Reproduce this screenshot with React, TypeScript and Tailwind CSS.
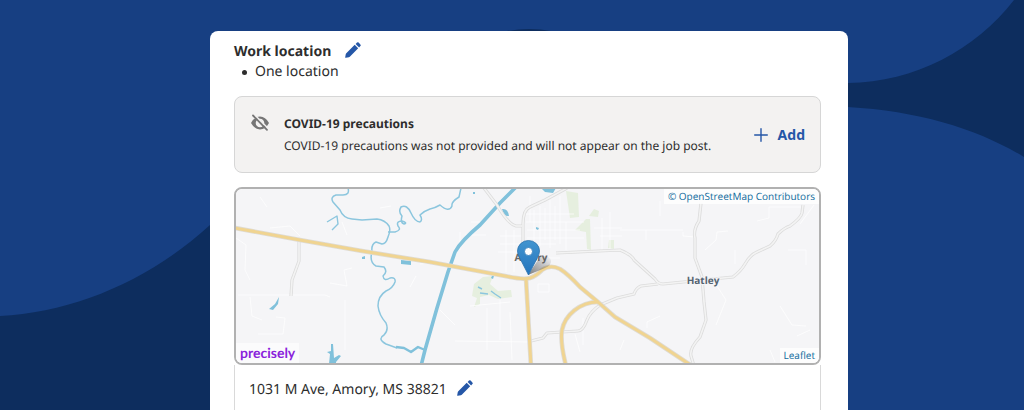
const MAJOR_ROADS = [
  'M235 228L300 240L362 251L430 262L505 276Q523 280 530 278Q536 276 542 270Q550 264 560 269Q568 274 580 287L598 302L615 317L650 338L692 366',
  'M526 279L531 366',
  'M598 302C580 302 565 315 562 330Q560 342 566 366',
];

const MINOR_ROADS = [
  'M484 188L497 205Q508 224 516 226L522 226',
  'M523 245L523 224Q523 210 530 207L545 200L567 188',
  'M556 253L620 250Q632 255 634 260L655 279Q658 284 663 284L733 277Q741 271 745 264Q750 255 757 252L770 246Q776 241 778 234Q784 228 790 226Q801 218 802 213L803 205',
  'M701 203L699 221Q693 230 695 238L695 258L702 277L704 302L706 320L700 337Q689 349 691 356L694 366',
  'M658 284L641 286Q636 288 634 294L617 298L600 305Q590 312 587 320Q583 331 578 331L562 332L547 333L543 338L531 341',
  'M299 241L299 261L292 280L291 296',
];

const STREETS = [
  'M260 197L267 207', 'M236 238L246 245L245 270L250 280', 'M270 228L290 226L300 236',
  'M238 295L325 295L330 297', 'M250 297L252 316L262 320', 'M258 334L283 334L285 318L276 317',
  'M345 300L345 350', 'M330 283L347 286L344 270L352 268', 'M342 222L347 235', 'M380 208L391 206',
  'M410 287L416 276', 'M460 232L460 250', 'M471 222L480 222M465 235L486 235', 'M420 264L440 262',
  'M487 308L487 350M500 300L500 340M510 312L512 360', 'M455 341L531 342', 'M470 306L510 302',
  'M440 310L455 325', 'M530 196L530 222M540 206L540 246M550 200L550 248M560 196L560 244',
  'M526 214L574 214M526 222L584 222M527 230L580 230M527 238L584 238',
  'M500 236L522 236M500 244L520 244M498 252L518 252M506 230L506 272M514 230L514 272',
  'M534 210L534 240M545 208L545 240M555 206L555 240M566 222L566 250',
  'M528 244L556 244M530 258L560 258M602 218L602 250M610 212L610 250M594 228L622 228M600 236L622 236',
  'M620 230L683 230M646 230L646 240M660 201L660 216', 'M683 232L683 236L695 237',
  'M705 250L716 240L717 232L728 231', 'M735 264L735 250', 'M757 221L769 218L769 207L803 207',
  'M717 286L726 300L716 325', 'M780 306L792 325L806 326', 'M797 336L810 330', 'M647 322L660 316',
  'M647 322L647 328', 'M583 318L583 345M580 352L575 334', 'M620 350L624 340', 'M770 350L775 362',
  'M788 250L806 250L806 265', 'M800 224L814 205', 'M538 284L538 292L549 292L549 284Z',
];

const RIVERS = [
  'M348 188Q350 195 343 195L336 195Q330 197 333 202L340 210Q343 218 352 219L362 220L377 219Q385 220 389 226Q391 230 388 237Q386 244 382 244L376 242Q371 244 372 252Q369 262 376 266L384 267Q388 272 383 276Q384 282 390 278Q396 277 395 282Q393 288 386 291Q378 296 378 306Q379 315 386 323Q389 330 384 335Q377 339 386 344L397 348',
  'M388 232L395 232Q402 230 398 226Q396 221 402 221Q408 223 404 224Q400 223 402 216Q398 212 401 207Q407 204 411 213Q415 222 420 222Q423 220 420 215Q424 211 430 209Q435 208 440 205Q449 213 452 206Q451 202 459 197L461 188',
];

const WATER = [
  'M541 188L556 188L553 193L545 192Z', 'M502 209Q508 208 509 216Q504 217 502 209Z',
  'M401 260L411 261L411 265L401 264Z', 'M279 297L278 304L273 310L269 309L275 304Z',
  'M362 257L365 256L365 259L362 259Z', 'M536 227L539 228L538 230L536 229Z',
  'M331 344L333 344L334 358L339 355L341 356L336 362L336 364L329 364L330 354L327 352L331 351Z',
  'M473 192L475 192L475 194L473 194Z', 'M492 276L494 276L493 279L491 278Z',
];

const PARKS = [
  'M566 191L578 193L579 217L570 218Z', 'M589 216L594 209L599 211L598 217Z',
  'M575 230L586 219L590 219L591 250L587 249L586 232Z', 'M609 240L614 240L614 249L608 248Z',
  'M474 284L483 277L493 276L490 284L498 291L511 290L512 297L498 299L489 295L480 297L480 304L474 307L477 298L472 296Z',
];

function PencilIcon() {
  return (
    <svg viewBox="0 0 16 16" className="size-4" fill="currentColor" aria-hidden="true">
      <path d="M9.7 2.8L13.2 6.3L4.8 14.7Q4.4 15.1 3.9 15.2L.8 15.8Q.1 15.9.2 15.2L.8 12.1Q.9 11.6 1.3 11.2Z" />
      <path d="M10.6 1.9L12 .6Q12.8 -.1 13.6.6L15.4 2.4Q16.1 3.2 15.4 4L14.1 5.4Z" />
    </svg>
  );
}

function HiddenIcon() {
  return (
    <svg viewBox="0 0 20 20" className="size-5 shrink-0 self-start text-[#767676]" fill="none" aria-hidden="true">
      <path
        d="M1 10Q4.500 3.500 10 3.500T19 10Q15.500 16.500 10 16.500T1 10ZM10 5.700A4.300 4.300 0 1 0 10 14.300A4.300 4.300 0 1 0 10 5.700Z"
        fill="currentColor"
        fillRule="evenodd"
      />
      <path d="M10 7.600A2.400 2.400 0 0 1 12.400 10L12.400 11Z" fill="currentColor" />
      <path d="M4.500 1.800L18.500 15.800" stroke="#f3f2f1" strokeWidth="1.600" />
      <path d="M3 2.500L17 16.800" stroke="currentColor" strokeWidth="1.800" strokeLinecap="round" />
    </svg>
  );
}

function EditButton({ label }: { label: string }) {
  return (
    <button type="button" aria-label={label} className="text-[#2557a7]">
      <PencilIcon />
    </button>
  );
}

function BackgroundShapes() {
  return (
    <svg
      viewBox="0 0 1024 410"
      preserveAspectRatio="xMidYMid slice"
      className="absolute inset-0 h-full w-full"
      fill="#0d2d5e"
      aria-hidden="true"
    >
      <path d="M0 316C75 312 150 280 210 225L400 60L400 410L0 410Z" />
      <path d="M1014 0C975 50 915 82 848 83L700 83L700 107L848 107C920 111 980 130 1024 157L1024 0Z" />
      <ellipse cx="529" cy="60" rx="60" ry="31" />
    </svg>
  );
}

function LocationMap() {
  return (
    <svg
      viewBox="236 189 583 174"
      preserveAspectRatio="xMidYMid slice"
      className="block h-full w-full"
      fill="none"
      strokeLinejoin="round"
      role="img"
      aria-label="Map of Amory"
    >
      <defs>
        <linearGradient id="pin" x1="0" y1="0" x2="0" y2="1">
          <stop offset="0" stopColor="#4295d0" />
          <stop offset="1" stopColor="#2474bd" />
        </linearGradient>
        <linearGradient id="shade" x1="0" y1="1" x2="1" y2="0">
          <stop offset="0" stopColor="#555" stopOpacity=".75" />
          <stop offset="1" stopColor="#555" stopOpacity="0" />
        </linearGradient>
      </defs>
      <rect x="236" y="188" width="584" height="176" fill="#f5f5f7" />
      {PARKS.map((d) => <path key={d} d={d} fill="#e6efdf" />)}
      {STREETS.map((d) => <path key={d} d={d} stroke="#fff" strokeOpacity=".7" strokeWidth="1" />)}
      {RIVERS.map((d) => <path key={d} d={d} stroke="#8cc6de" strokeWidth="1.5" />)}
      <path d="M516 187L500 203L480 225Q461 241 455 252L448 272L437 308L425 350L421 366" stroke="#80c1db" strokeWidth="3.6" />
      <path d="M396 347L404 348L411 352L418 347L425 350" stroke="#80c1db" strokeWidth="2.4" />
      <path d="M327 222L337 216L338 224L332 230M478 287L482 289M480 293L488 294M491 291L495 294L501 298" stroke="#8cc6de" strokeWidth="1.4" />
      {WATER.map((d) => <path key={d} d={d} fill="#80c1db" />)}
      {MINOR_ROADS.map((d) => <path key={d} d={d} stroke="#dcdcdc" strokeWidth="3.2" />)}
      {MINOR_ROADS.map((d) => <path key={d} d={d} stroke="#f3f3f3" strokeWidth="1.6" />)}
      {MAJOR_ROADS.map((d) => <path key={d} d={d} stroke="#dedbd4" strokeWidth="4.6" />)}
      {MAJOR_ROADS.map((d) => <path key={d} d={d} stroke="#f0d491" strokeWidth="3" />)}
      <g className="font-['Open_Sans',sans-serif] text-[10px] font-bold" stroke="#f5f5f7" strokeWidth="2" paintOrder="stroke" textAnchor="middle">
        <text x="531" y="261" fill="#666">Amory</text>
        <text x="703" y="284" fill="#566472">Hatley</text>
      </g>
      <path d="M528 275L540 257Q548 254 551 260Q552 265 545 268Z" fill="url(#shade)" />
      <path
        d="M528.5 275L519.5 257.5Q517.5 254 517.5 251A11 10.5 0 0 1 539.5 251Q539.5 254 537.5 257.5Z"
        fill="url(#pin)"
        stroke="#2f73ad"
        strokeWidth=".8"
      />
      <circle cx="528.5" cy="251.5" r="4" fill="#fff" stroke="#2f7ab8" strokeWidth=".8" />
    </svg>
  );
}

function LocationCard() {
  return (
    <div className="mt-3.5">
      <div className="relative h-[178px] overflow-hidden rounded-lg border-2 border-[#b1b1b1]">
        <LocationMap />
        <a href="#osm" className="absolute top-0 right-0 bg-white/80 px-1 font-['Open_Sans',sans-serif] text-[10px] leading-[15px] text-[#0f6a9c]">
          © OpenStreetMap Contributors
        </a>
        <a href="#leaflet" className="absolute right-0 bottom-0 bg-white/80 px-1 font-['Open_Sans',sans-serif] text-[10px] leading-[15px] text-[#0f6a9c]">
          Leaflet
        </a>
        <span className="absolute bottom-0 left-0 bg-white/60 px-1 font-['Lato',sans-serif] text-sm leading-5 font-bold text-[#8a22db]">
          precisely
        </span>
      </div>
      <div className="flex h-16 items-start gap-2.5 border-x border-[#d9d9d9] px-3.5 pt-[15px]">
        <p className="text-sm leading-5">1031 M Ave, Amory, MS 38821</p>
        <EditButton label="Edit address" />
      </div>
    </div>
  );
}

export default function App() {
  return (
    <div className="relative h-screen overflow-hidden bg-[#173f82] font-['Noto_Sans','Open_Sans',sans-serif] text-[#2d2d2d] [text-rendering:geometricPrecision]">
      <BackgroundShapes />
      <main className="relative mt-[31px] mr-44 ml-[210px] rounded-t-lg bg-white pt-[11px] pr-[27px] pl-6">
        <div className="flex items-start gap-3.5">
          <h2 className="text-sm leading-5 font-bold">Work location</h2>
          <EditButton label="Edit work location" />
        </div>
        <ul className="pl-2 text-sm leading-5">
          <li className="flex items-center gap-2">
            <span className="size-[5px] rounded-full bg-current" />
            One location
          </li>
        </ul>

        <section className="mt-3.5 flex items-center rounded-lg border border-[#d6d6d6] bg-[#f3f2f1] px-[15px] pt-4 pb-[15px]">
          <HiddenIcon />
          <div className="ml-3.5 flex-1">
            <h3 className="text-xs leading-[22px] font-bold">COVID-19 precautions</h3>
            <p className="text-xs leading-[22px]">
              COVID-19 precautions was not provided and will not appear on the job post.
            </p>
          </div>
          <button type="button" className="flex items-center gap-2.5 text-sm leading-5 font-bold text-[#2557a7]">
            <svg viewBox="0 0 14 14" className="size-3.5" stroke="currentColor" strokeWidth="1.4" strokeLinecap="round" aria-hidden="true">
              <path d="M7 .7V13.3M.7 7H13.3" />
            </svg>
            Add
          </button>
        </section>

        <LocationCard />
      </main>
    </div>
  );
}
